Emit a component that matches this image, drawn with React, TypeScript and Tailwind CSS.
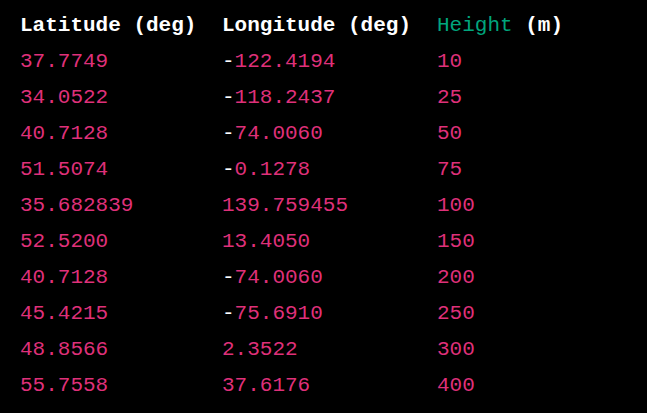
import React from "react";

const rows: [string, string, string][] = [
  ["37.7749", "-122.4194", "10"],
  ["34.0522", "-118.2437", "25"],
  ["40.7128", "-74.0060", "50"],
  ["51.5074", "-0.1278", "75"],
  ["35.682839", "139.759455", "100"],
  ["52.5200", "13.4050", "150"],
  ["40.7128", "-74.0060", "200"],
  ["45.4215", "-75.6910", "250"],
  ["48.8566", "2.3522", "300"],
  ["55.7558", "37.6176", "400"],
];

function Num({ v }: { v: string }) {
  if (v.startsWith("-")) {
    return (
      <span>
        <span className="text-white">-</span>
        <span className="text-[#df3079]">{v.slice(1)}</span>
      </span>
    );
  }
  return <span className="text-[#df3079]">{v}</span>;
}

export default function App() {
  return (
    <div
      className="w-[647px] h-[413px] bg-black pl-5 pt-2 text-[21px] leading-[36px] whitespace-pre"
      style={{ fontFamily: '"Liberation Mono", "DejaVu Sans Mono", monospace' }}
    >
      <div className="grid grid-cols-[202px_215px_1fr]">
        <div className="text-white font-bold">Latitude (deg)</div>
        <div className="text-white font-bold">Longitude (deg)</div>
        <div className="text-white font-bold">
          <span className="text-[#00a67d] font-normal">Height</span> (m)
        </div>
        {rows.map((r, i) => (
          <React.Fragment key={i}>
            <div>
              <Num v={r[0]} />
            </div>
            <div>
              <Num v={r[1]} />
            </div>
            <div>
              <Num v={r[2]} />
            </div>
          </React.Fragment>
        ))}
      </div>
    </div>
  );
}
